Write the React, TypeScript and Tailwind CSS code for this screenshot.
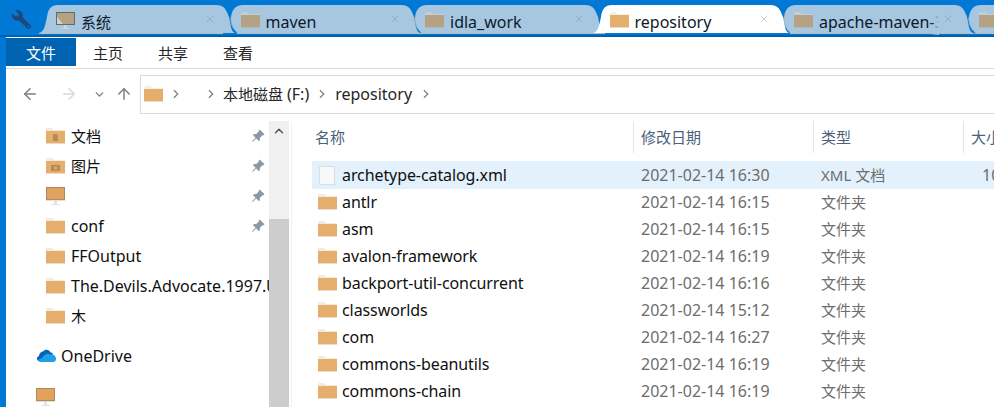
import React from 'react';
import { ArrowLeft, ArrowRight, ArrowUp, ChevronDown, ChevronRight, ChevronUp, X } from 'lucide-react';
import { BsPinAngleFill } from 'react-icons/bs';
import { FaWrench } from 'react-icons/fa';

const latin = 'font-["Noto_Sans","Noto_Sans_CJK_SC",sans-serif]';

function Folder({ body = '#e5ae6c', top = '#f1ebdf', edge = '#eadccb', children }: { body?: string; top?: string; edge?: string; children?: React.ReactNode }) {
  return (
    <svg width="19" height="16" viewBox="0 0 19 16" className="shrink-0">
      <path d="M0 4V1.5Q0 0 1.500 0H6L8 2H18Q19 2 19 3V4Z" fill={top} />
      <rect x="0" y="3" width="19" height="12" fill={body} />
      <rect x="0" y="15" width="19" height="1" fill={edge} />
      {children}
    </svg>
  );
}

function Monitor({ body = '#e0a25c', border = '#b08a5c' }: { body?: string; border?: string }) {
  return (
    <svg width="19" height="18" viewBox="0 0 19 18" className="shrink-0">
      <rect x="0.500" y="0.500" width="18" height="12" fill={body} stroke={border} />
      <rect x="0" y="13" width="19" height="1" fill="#e3ded6" />
      <rect x="8" y="14" width="3" height="3" fill="#e3e3e3" />
      <rect x="5" y="17" width="9" height="1" fill="#e3e3e3" />
    </svg>
  );
}

type TabProps = { label?: string; active?: boolean; first?: boolean; fade?: boolean; icon?: React.ReactNode };

function Tab({ label, active, first, fade, icon }: TabProps) {
  const flared = active || first;
  const shape = flared
    ? 'M0 28C6 28 7 21 9 12C10 4 13 0 20 0H178C186 0 188 4 191 12C193 21 193 28 198 28Z'
    : 'M14.500 28C10 24 7 18 8 12C9 4 13 0 20 0H178C186 0 188 4 191 12C193 21 193 28 198 28Z';
  return (
    <div className={`relative h-[29px] w-[198px] shrink-0 -mr-[13.5px] ${active ? 'z-10' : ''}`}>
      <svg width="198" height="29" viewBox="0 0 198 29" className="absolute inset-0">
        <path d={shape} fill={active ? '#ffffff' : '#a7c6e0'} />
        {!active && <rect x={first ? 1 : 14} y="28" width="184" height="1" fill="#b4b9be" />}
        {!flared && <path d="M14.500 28C10 24 7 18 8 12" fill="none" stroke="#8ba9c5" />}
      </svg>
      <div className={`relative flex h-full items-center pl-[18px] pt-[1px] ${latin}`}>
        {icon}
        <span className={`ml-[6px] mt-[3px] whitespace-nowrap leading-[26px] text-[#0b1a2b] ${first ? 'text-[15px]' : 'text-[16px]'} ${fade ? 'relative w-[120px] overflow-hidden' : ''}`}>
          {label}
          {fade && <span className="absolute inset-y-0 right-0 w-[8px] bg-gradient-to-r from-[#a7c6e0]/0 to-[#a7c6e0]" />}
        </span>
        <X size={12} strokeWidth={1.500} className={`absolute left-[166px] top-[8px] ${active ? 'text-[#c2c2c2]' : 'text-[#8aa6c1]'}`} />
      </div>
    </div>
  );
}

const dimFolder = { body: '#b5a283', top: '#c3cfd6', edge: '#b0b5b5' };

function SideRow({ icon, label, pinned, cjk }: { icon: React.ReactNode; label?: string; pinned?: boolean; cjk?: boolean }) {
  return (
    <div className="relative flex h-[30px] items-center pl-[40px]">
      {icon}
      <span className={`ml-[6px] whitespace-nowrap text-[#101010] ${cjk ? 'text-[15px]' : 'text-[16px]'}`}>{label}</span>
      {pinned && <BsPinAngleFill size={14} className="absolute left-[245px] top-[8px] text-[#8b98a4]" />}
    </div>
  );
}

const files = [
  { name: 'antlr', date: '2021-02-14 16:15' },
  { name: 'asm', date: '2021-02-14 16:15' },
  { name: 'avalon-framework', date: '2021-02-14 16:19' },
  { name: 'backport-util-concurrent', date: '2021-02-14 16:16' },
  { name: 'classworlds', date: '2021-02-14 15:12' },
  { name: 'com', date: '2021-02-14 16:27' },
  { name: 'commons-beanutils', date: '2021-02-14 16:19' },
  { name: 'commons-chain', date: '2021-02-14 16:19' },
];

const rowGrid = 'grid grid-cols-[329px_180px_150px_1fr] items-center';

function Header({ label, line }: { label: string; line?: boolean }) {
  return (
    <div className={`flex h-[32px] items-center whitespace-nowrap text-[15px] text-[#4c607a] ${line ? 'border-l border-[#e5e5e5] pl-[7px]' : 'pl-[3px]'}`}>
      {label}
    </div>
  );
}

export default function App() {
  return (
    <div className={`flex h-[407px] w-[994px] flex-col overflow-hidden bg-[#0078d4] ${latin}`}>
      {/* Tab strip */}
      <div className="flex h-[35px] items-start pt-[5px]">
        <div className="flex h-[29px] w-[38px] shrink-0 items-center justify-center pl-[4px]">
          <FaWrench size={19} className="-scale-x-100 text-[#1c4a78]" />
        </div>
        <Tab first label="系统" icon={
          <svg width="19" height="17" viewBox="0 0 19 17" className="shrink-0">
            <rect x="0.500" y="0.500" width="18" height="12" fill="#b5a283" stroke="#5d6b78" />
            <path d="M1 12V5L7 12Z" fill="#cfd3cc" />
            <rect x="8" y="13" width="3" height="3" fill="#c9d6e0" />
            <rect x="5" y="16" width="9" height="1" fill="#c9d6e0" />
          </svg>
        } />
        <Tab label="maven" icon={<Folder {...dimFolder} />} />
        <Tab label="idla_work" icon={<Folder {...dimFolder} />} />
        <Tab active label="repository" icon={<Folder top="#f5efe5" />} />
        <Tab fade label="apache-maven-3.6.3" icon={<Folder {...dimFolder} />} />
        <Tab label="" icon={<Folder {...dimFolder} />} />
      </div>
      <div className="h-[2px] bg-[#0061ae]" />

      <div className="ml-[6px] flex min-h-0 flex-1 flex-col bg-white">
        {/* Ribbon tabs */}
        <div className="flex h-[32px] items-start border-b border-[#dadada] pt-[1px] text-[15px] text-[#262626]">
          <div className="flex h-[28px] w-[70px] items-center justify-center bg-[#0063b1] pt-[2px] text-white">文件</div>
          <div className="ml-[17px] flex h-[28px] items-center pt-[2px]">主页</div>
          <div className="ml-[35px] flex h-[28px] items-center pt-[2px]">共享</div>
          <div className="ml-[35px] flex h-[28px] items-center pt-[2px]">查看</div>
        </div>

        {/* Address row */}
        <div className="flex h-[45px] items-center pt-[5px]">
          <ArrowLeft size={18} strokeWidth={2} className="ml-[15px] text-[#7f7f7f]" />
          <ArrowRight size={18} strokeWidth={2} className="ml-[21px] text-[#d8d8d8]" />
          <ChevronDown size={13} strokeWidth={2.500} className="ml-[15px] text-[#7f7f7f]" />
          <ArrowUp size={18} strokeWidth={2} className="ml-[9px] text-[#7f7f7f]" />
          <div className="ml-[7px] flex h-[39px] flex-1 items-center border border-r-0 border-[#d9d9d9] pl-[3px] text-[#262626]">
            <Folder top="#f5efe5" />
            <ChevronRight size={14} strokeWidth={2} className="ml-[6px] text-[#7f7f7f]" />
            <ChevronRight size={14} strokeWidth={2} className="ml-[21px] text-[#7f7f7f]" />
            <span className="ml-[5px] text-[15px]">本地磁盘</span>
            <span className="ml-[4px] text-[16px]">(F:)</span>
            <ChevronRight size={14} strokeWidth={2} className="ml-[6px] text-[#7f7f7f]" />
            <span className="ml-[6px] text-[16px]">repository</span>
            <ChevronRight size={14} strokeWidth={2} className="ml-[7px] text-[#7f7f7f]" />
          </div>
        </div>

        {/* Panes */}
        <div className="flex min-h-0 flex-1">
          <div className="w-[263px] shrink-0 overflow-hidden pt-[7px]">
            <SideRow pinned cjk label="文档" icon={
              <Folder>
                <path d="M7 6H10.500L12 7.500V13H7Z" fill="#b98a55" />
              </Folder>
            } />
            <SideRow pinned cjk label="图片" icon={
              <Folder>
                <rect x="5" y="7" width="9" height="6" fill="#b98a55" />
                <circle cx="9.500" cy="10" r="1.500" fill="#e5ae6c" />
              </Folder>
            } />
            <SideRow pinned icon={<Monitor />} />
            <SideRow pinned label="conf" icon={<Folder />} />
            <SideRow label="FFOutput" icon={<Folder />} />
            <SideRow label="The.Devils.Advocate.1997.UNRATED" icon={<Folder />} />
            <SideRow cjk label="木" icon={<Folder />} />
            <div className="mt-[10px] flex h-[30px] items-center pl-[30px]">
              <svg width="20" height="14" viewBox="0 0 20 14" className="shrink-0">
                <path d="M3 7C3.500 3.500 6 2.500 7 2.500C9 0 13 0 14.500 3.500C16 3.500 16.500 4 17 5L7 12H3C0.500 11.500 0 8 3 7Z" fill="#0364b8" />
                <path d="M8 6.500C10 4.500 12 4 14.500 5.500C17 4.500 20 7 20 10C20 12 18.500 13 17.500 13H5C3 13 1.500 12 2 10.500C4 10 6 9.500 8 6.500Z" fill="#1f9fe8" />
              </svg>
              <span className="ml-[5px] text-[16px] text-[#101010]">OneDrive</span>
            </div>
            <div className="mt-[17px] pl-[30px]">
              <Monitor />
            </div>
          </div>

          {/* Scrollbar */}
          <div className="mt-[7px] flex w-[20px] shrink-0 flex-col bg-[#f0f0f0]">
            <div className="flex h-[98px] justify-center pt-[3px]">
              <ChevronUp size={14} strokeWidth={2.500} className="text-[#555555]" />
            </div>
            <div className="flex-1 bg-[#cdcdcd]" />
          </div>

          {/* File list */}
          <div className="ml-[2px] mt-[7px] min-w-0 flex-1 border-l border-[#f2f2f2] pl-[20px]">
            <div className="grid grid-cols-[321px_180px_150px_1fr]">
              <Header label="名称" />
              <Header line label="修改日期" />
              <Header line label="类型" />
              <Header line label="大小" />
            </div>
            <div className={`${rowGrid} mt-[8px] h-[28px] bg-[#e3f1fc] text-[16px]`}>
              <div className="flex items-center pl-[7px] tracking-[-0.09px] text-[#101010]">
                <div className="h-[19px] w-[16px] border border-[#d5deed] bg-[#f8f8f8]" />
                <span className="ml-[7px]">archetype-catalog.xml</span>
              </div>
              <div className="text-[#6d6d6d]">2021-02-14 16:30</div>
              <div className="text-[15px] text-[#6d6d6d]">XML 文档</div>
              <div className="pl-[11px] text-[#6d6d6d]">10</div>
            </div>
            <div className="-mt-[0.5px]">
              {files.map(file => (
                <div key={file.name} className={`${rowGrid} h-[27px] text-[16px]`}>
                  <div className="flex items-center pl-[6px] tracking-[-0.09px] text-[#101010]">
                    <Folder />
                    <span className="ml-[5px]">{file.name}</span>
                  </div>
                  <div className="text-[#6d6d6d]">{file.date}</div>
                  <div className="text-[15px] text-[#6d6d6d]">文件夹</div>
                  <div />
                </div>
              ))}
            </div>
          </div>
        </div>
      </div>
    </div>
  );
}
